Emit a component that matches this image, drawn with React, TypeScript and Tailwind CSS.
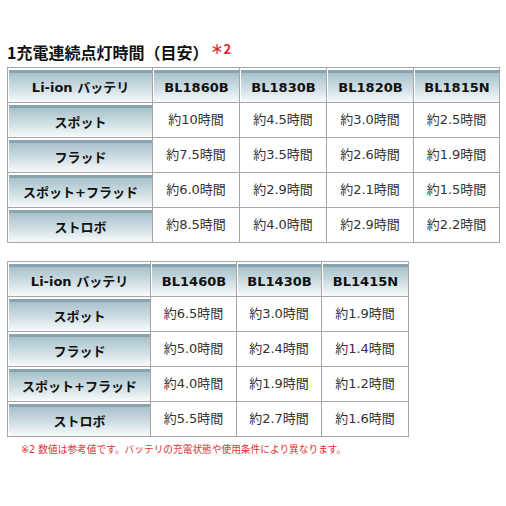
import React from "react";

type TableData = {
  width: string;
  cols: string[];
  models: string[];
  rows: { label: string; values: string[] }[];
};

const LABELS = ["スポット", "フラッド", "スポット+フラッド", "ストロボ"];

const TABLES: TableData[] = [
  {
    width: "w-[492px]",
    cols: ["w-[145px]", "w-[87px]", "w-[87px]", "w-[87px]", "w-[86px]"],
    models: ["BL1860B", "BL1830B", "BL1820B", "BL1815N"],
    rows: [
      { label: LABELS[0], values: ["約10時間", "約4.5時間", "約3.0時間", "約2.5時間"] },
      { label: LABELS[1], values: ["約7.5時間", "約3.5時間", "約2.6時間", "約1.9時間"] },
      { label: LABELS[2], values: ["約6.0時間", "約2.9時間", "約2.1時間", "約1.5時間"] },
      { label: LABELS[3], values: ["約8.5時間", "約4.0時間", "約2.9時間", "約2.2時間"] },
    ],
  },
  {
    width: "w-[401px]",
    cols: ["w-[143px]", "w-[86px]", "w-[85px]", "w-[87px]"],
    models: ["BL1460B", "BL1430B", "BL1415N"],
    rows: [
      { label: LABELS[0], values: ["約6.5時間", "約3.0時間", "約1.9時間"] },
      { label: LABELS[1], values: ["約5.0時間", "約2.4時間", "約1.4時間"] },
      { label: LABELS[2], values: ["約4.0時間", "約1.9時間", "約1.2時間"] },
      { label: LABELS[3], values: ["約5.5時間", "約2.7時間", "約1.6時間"] },
    ],
  },
];

// gradient heading cell (the table's bar image)
function BarCell({ children }: { children: React.ReactNode }) {
  return (
    <td className="p-0 h-[35px] border border-[#a6a6a6] align-top">
      <div className="pt-[2px] pl-[1px]">
        <div className="h-[32px] border-t-[3px] border-[#88a4b1] bg-gradient-to-b from-[#a9c1cb] via-[#cddde3] to-[#f8fafb] flex items-center justify-center font-bold text-[13px] text-[#111] whitespace-nowrap">
          {children}
        </div>
      </div>
    </td>
  );
}

function RuntimeTable({ data }: { data: TableData }) {
  return (
    <table className={`${data.width} table-fixed border-collapse border border-[#a6a6a6]`}>
      <colgroup>
        {data.cols.map((c, i) => (
          <col key={i} className={c} />
        ))}
      </colgroup>
      <tbody>
        <tr>
          <BarCell>Li-ion バッテリ</BarCell>
          {data.models.map((m) => (
            <BarCell key={m}>{m}</BarCell>
          ))}
        </tr>
        {data.rows.map((r) => (
          <tr key={r.label}>
            <BarCell>{r.label}</BarCell>
            {r.values.map((v, i) => (
              <td
                key={i}
                className="p-0 h-[35px] border border-[#a6a6a6] text-center text-[13px] text-[#333] bg-white"
              >
                {v}
              </td>
            ))}
          </tr>
        ))}
      </tbody>
    </table>
  );
}

export default function App() {
  return (
    <div
      className="w-[506px] h-[506px] bg-white pl-[7px] pt-[42px]"
      style={{ fontFamily: '"DejaVu Sans", "Noto Sans CJK JP", sans-serif' }}
    >
      <h1 className="flex items-start text-[16px] leading-[20px] font-bold text-[#111]">
        <span style={{ fontFamily: '"Noto Sans CJK JP", sans-serif' }}>1充電連続点灯時間（目安）</span>
        <span
          className="ml-[2px] text-[13px] leading-[14px] text-[#d8262c]"
          style={{ fontFamily: '"Noto Sans CJK JP", sans-serif' }}
        >
          ＊2
        </span>
      </h1>

      <div className="mt-[5px]">
        <RuntimeTable data={TABLES[0]} />
      </div>

      <div className="mt-[18px]">
        <RuntimeTable data={TABLES[1]} />
      </div>

      <p className="mt-[6px] ml-[14px] text-[9.7px] leading-[14px] text-[#e03030]">
        ※2 数値は参考値です。バッテリの充電状態や使用条件により異なります。
      </p>
    </div>
  );
}
